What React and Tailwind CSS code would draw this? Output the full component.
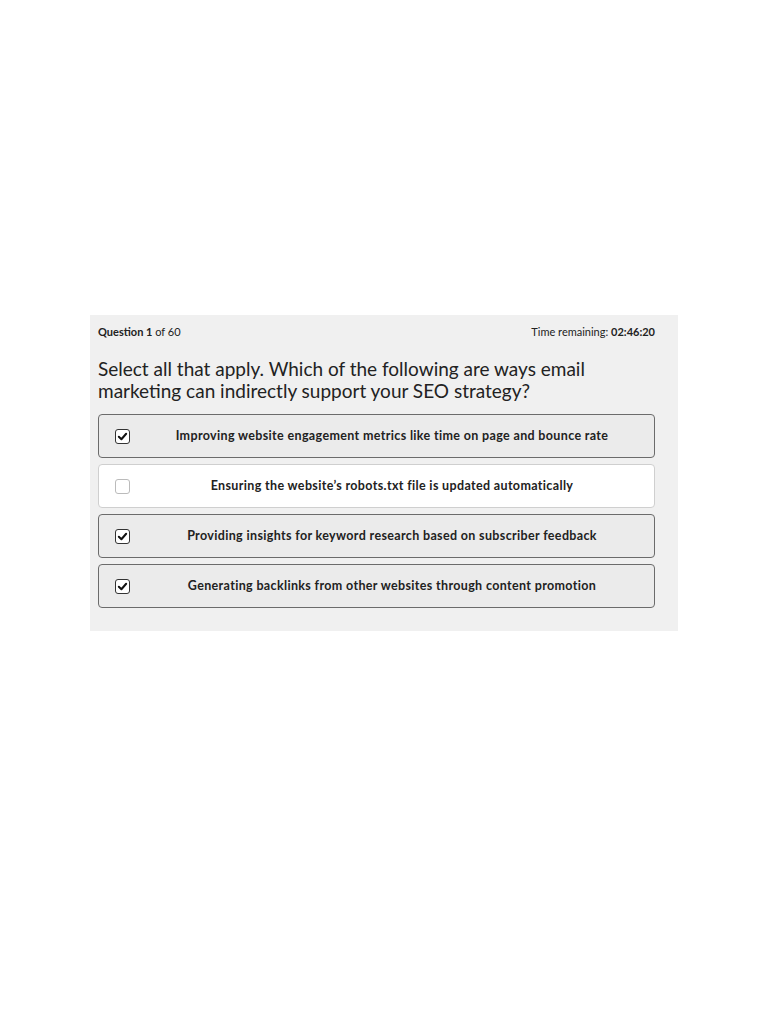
import React from "react";

const options = [
  { text: "Improving website engagement metrics like time on page and bounce rate", checked: true },
  { text: "Ensuring the website\u2019s robots.txt file is updated automatically", checked: false },
  { text: "Providing insights for keyword research based on subscriber feedback", checked: true },
  { text: "Generating backlinks from other websites through content promotion", checked: true },
];

function Check({ checked }) {
  return (
    <div
      className={
        "w-[15px] h-[15px] rounded-[3px] flex items-center justify-center shrink-0 " +
        (checked ? "border border-[#333] bg-white" : "border border-[#bbb] bg-white")
      }
    >
      {checked && (
        <svg width="11" height="11" viewBox="0 0 12 12">
          <path d="M2 6.3 L4.8 9 L10 3" fill="none" stroke="#111" strokeWidth="2.2" strokeLinecap="round" strokeLinejoin="round" />
        </svg>
      )}
    </div>
  );
}

export default function App() {
  return (
    <div className="w-[768px] h-[1024px] bg-white pt-[315px] pl-[90px]" style={{ fontFamily: "Lato, 'Noto Sans', sans-serif" }}>
      <div className="w-[588px] h-[316px] bg-[#f0f0f0] pt-[10px] pl-[8px] pr-[23px] text-[#222]">
        <div className="flex justify-between items-center h-[12px] text-[11px] mt-[1px]">
          <div><span className="font-bold">Question 1</span> of 60</div>
          <div>Time remaining: <span className="font-bold">02:46:20</span></div>
        </div>
        <div className="mt-[20px] text-[19px] leading-[22px] text-[#222]">
          Select all that apply. Which of the following are ways email
          <br />
          marketing can indirectly support your SEO strategy?
        </div>
        <div className="mt-[12px] flex flex-col gap-[6px]">
          {options.map((o, i) => (
            <div
              key={i}
              className={
                "h-[44px] rounded-[4px] flex items-center pl-[16px] " +
                (o.checked ? "bg-[#ebebeb] border border-[#6b6b6b]" : "bg-white border border-[#cfcfcf]")
              }
            >
              <Check checked={o.checked} />
              <div className="flex-1 text-center text-[12.5px] font-bold tracking-[0.35px] text-[#222]">{o.text}</div>
            </div>
          ))}
        </div>
      </div>
    </div>
  );
}
